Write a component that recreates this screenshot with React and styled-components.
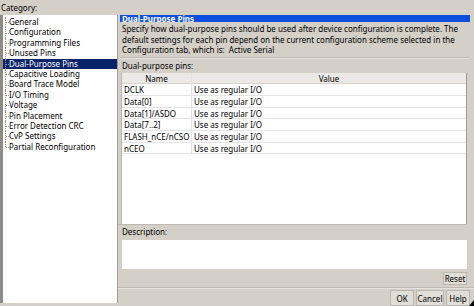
import React from 'react';
import styled, { createGlobalStyle } from 'styled-components';

const GlobalStyle = createGlobalStyle`
  html, body {
    margin: 0;
    padding: 0;
    background: #d4d0c8;
  }
  body {
    font-family: 'Noto Sans', 'Open Sans', sans-serif;
    font-size: 8px;
    color: #000;
  }
`;

const Dialog = styled.div`
  position: relative;
  width: 474px;
  height: 306px;
  display: flex;
  background: #d4d0c8;
  overflow: hidden;
`;

const LeftColumn = styled.div`
  width: 118px;
  flex: none;
  display: flex;
  flex-direction: column;
`;

const CategoryLabel = styled.div`
  height: 15px;
  line-height: 15px;
  padding-left: 1px;
`;

const Tree = styled.ul`
  flex: 1;
  margin: 0 0 3px;
  padding: 2px 0 0;
  list-style: none;
  background: #fff;
  border-left: 3px solid #8e8b85;
  border-right: 1px solid #a19e98;
`;

const TreeItem = styled.li`
  position: relative;
  height: 10.4px;
  line-height: 10.4px;
  padding-left: 6px;
  white-space: nowrap;
  background: ${({ selected }) => (selected ? '#0a246a' : 'transparent')};
  color: ${({ selected }) => (selected ? '#fff' : '#000')};

  &::before {
    content: '';
    position: absolute;
    left: 2px;
    top: 0;
    height: ${({ last }) => (last ? '50%' : '100%')};
    border-left: 1px dotted #9a9a9a;
  }
  &::after {
    content: '';
    position: absolute;
    left: 3px;
    top: 50%;
    width: 3px;
    border-top: 1px dotted #9a9a9a;
  }
`;

const RightColumn = styled.div`
  flex: 1;
  min-width: 0;
  display: flex;
  flex-direction: column;
  padding-top: 15px;
`;

const TitleBar = styled.div`
  height: 7px;
  margin: 0 4px 0 2px;
  padding-left: 2px;
  overflow: hidden;
  background: #0c4fdf;
  color: #fff;
  font-size: 8px;
  font-weight: bold;
  line-height: 7px;
`;

const Intro = styled.div`
  margin: 2px 0 0 4px;
  line-height: 10.5px;
  white-space: pre;
`;

const Separator = styled.div`
  margin: ${({ m }) => m || '0'};
  border-top: 1px solid #bebab3;
  border-bottom: 1px solid #e6e3de;
`;

const GroupLabel = styled.div`
  height: 14px;
  line-height: 14px;
  padding-left: 4px;
`;

const TableFrame = styled.div`
  flex: 1;
  margin: 0 7px 0 3px;
  background: #fff;
  border-left: 1px solid #b8b4ad;
  border-right: 1px solid #9d9a94;
`;

const TableRow = styled.div`
  display: grid;
  grid-template-columns: 70px 1fr;
  height: 11.7px;
  line-height: 11px;
  box-sizing: border-box;
  border-bottom: 1px solid ${({ head }) => (head ? '#d8d5cf' : '#e4e4e4')};
  background: ${({ head }) => (head ? '#ebe9e5' : '#fff')};
`;

const Cell = styled.div`
  padding-left: ${({ head }) => (head ? '0' : '2px')};
  text-align: ${({ head }) => (head ? 'center' : 'left')};
  white-space: nowrap;
  border-right: ${({ divider }) => (divider ? '1px solid #e2e2e2' : 'none')};
`;

const DescLabel = styled.div`
  height: 14px;
  line-height: 14px;
  padding-left: 4px;
  margin-right: 7px;
  border-top: 1px solid #bebab3;
`;

const DescBox = styled.div`
  height: 29px;
  margin: 1px 7px 0 4px;
  background: #fff;
`;

const ButtonRow = styled.div`
  height: ${({ h }) => h};
  flex: none;
  display: flex;
  justify-content: flex-end;
  align-items: ${({ bottom }) => (bottom ? 'flex-end' : 'center')};
  gap: 2px;
  padding-right: ${({ pr }) => pr};
`;

const Button = styled.button`
  box-sizing: border-box;
  height: ${({ tall }) => (tall ? '16px' : '13px')};
  width: ${({ w }) => w};
  padding: 0;
  font-family: inherit;
  font-size: 8px;
  line-height: 11px;
  background: #e1ded8;
  border: 1px solid #bbb7af;
  border-radius: 0;
  color: #000;
`;

const Grip = styled.svg`
  position: absolute;
  right: 0;
  bottom: 0;
`;

const categories = [
  'General',
  'Configuration',
  'Programming Files',
  'Unused Pins',
  'Dual-Purpose Pins',
  'Capacitive Loading',
  'Board Trace Model',
  'I/O Timing',
  'Voltage',
  'Pin Placement',
  'Error Detection CRC',
  'CvP Settings',
  'Partial Reconfiguration',
];

const pins = ['DCLK', 'Data[0]', 'Data[1]/ASDO', 'Data[7..2]', 'FLASH_nCE/nCSO', 'nCEO'];

export default function App() {
  return (
    <>
      <GlobalStyle />
      <Dialog>
        <LeftColumn>
          <CategoryLabel>Category:</CategoryLabel>
          <Tree>
            {categories.map((c, i) => (
              <TreeItem key={c} selected={c === 'Dual-Purpose Pins'} last={i === categories.length - 1}>
                {c}
              </TreeItem>
            ))}
          </Tree>
        </LeftColumn>
        <RightColumn>
          <TitleBar>Dual-Purpose Pins</TitleBar>
          <Intro>
            {'Specify how dual-purpose pins should be used after device configuration is complete. The\n'}
            {'default settings for each pin depend on the current configuration scheme selected in the\n'}
            {'Configuration tab, which is:  Active Serial'}
          </Intro>
          <Separator m="1px 4px 0 2px" />
          <GroupLabel>Dual-purpose pins:</GroupLabel>
          <TableFrame>
            <TableRow head>
              <Cell head divider>Name</Cell>
              <Cell head>Value</Cell>
            </TableRow>
            {pins.map(p => (
              <TableRow key={p}>
                <Cell divider>{p}</Cell>
                <Cell>Use as regular I/O</Cell>
              </TableRow>
            ))}
          </TableFrame>
          <DescLabel>Description:</DescLabel>
          <DescBox />
          <ButtonRow h="18px" pr="7px">
            <Button w="24px">Reset</Button>
          </ButtonRow>
          <Separator />
          <ButtonRow h="17px" pr="4px" bottom>
            <Button tall w="24px">OK</Button>
            <Button tall w="28px">Cancel</Button>
            <Button tall w="24px">Help</Button>
          </ButtonRow>
        </RightColumn>
        <Grip width="5" height="6" viewBox="0 0 5 6">
          <path d="M5 0 L5 6 L0 6 Z" fill="#000" />
        </Grip>
      </Dialog>
    </>
  );
}
